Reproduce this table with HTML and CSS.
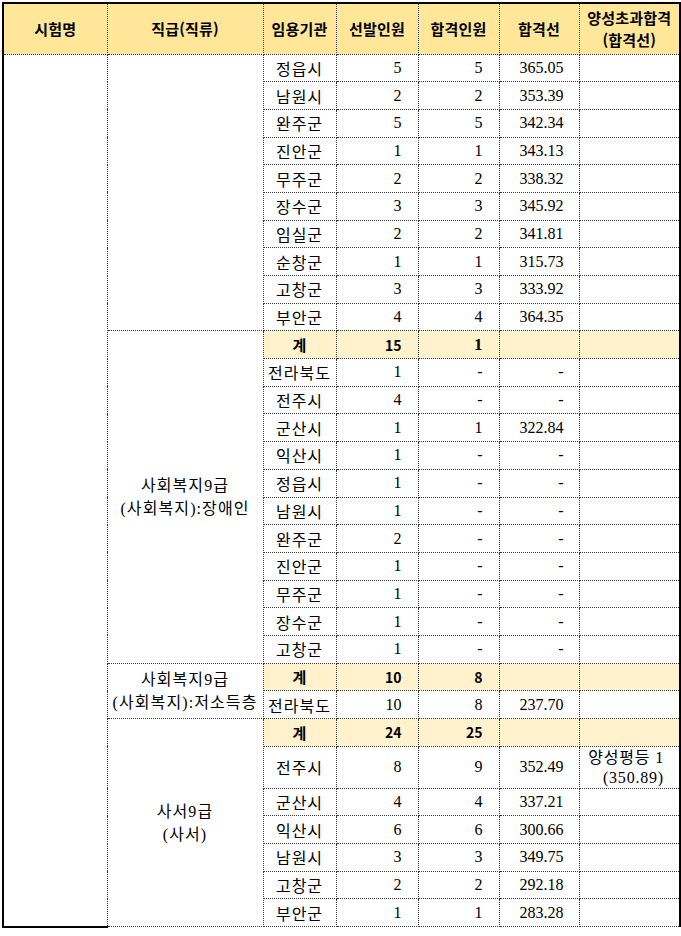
FILE: index.html
```html
<!DOCTYPE html>
<html lang="ko">
<head>
<meta charset="utf-8">
<title>합격선</title>
<link rel="stylesheet" href="styles.css">
</head>
<body>
<table class="grid">
  <colgroup>
    <col class="c1"><col class="c2"><col class="c3"><col class="c4"><col class="c5"><col class="c6"><col class="c7">
  </colgroup>
  <thead>
    <tr class="head">
      <th>시험명</th><th>직급(직류)</th><th>임용기관</th><th>선발인원</th><th>합격인원</th><th>합격선</th><th class="two">양성초과합격<br>(합격선)</th>
    </tr>
  </thead>
  <tbody>
    <tr><td class="exam" rowspan="31"></td><td class="grade" rowspan="10"></td><td class="org">정읍시</td><td class="num">5</td><td class="num">5</td><td class="score">365.05</td><td class="extra"></td></tr>
    <tr><td class="org">남원시</td><td class="num">2</td><td class="num">2</td><td class="score">353.39</td><td class="extra"></td></tr>
    <tr><td class="org">완주군</td><td class="num">5</td><td class="num">5</td><td class="score">342.34</td><td class="extra"></td></tr>
    <tr><td class="org">진안군</td><td class="num">1</td><td class="num">1</td><td class="score">343.13</td><td class="extra"></td></tr>
    <tr><td class="org">무주군</td><td class="num">2</td><td class="num">2</td><td class="score">338.32</td><td class="extra"></td></tr>
    <tr><td class="org">장수군</td><td class="num">3</td><td class="num">3</td><td class="score">345.92</td><td class="extra"></td></tr>
    <tr><td class="org">임실군</td><td class="num">2</td><td class="num">2</td><td class="score">341.81</td><td class="extra"></td></tr>
    <tr><td class="org">순창군</td><td class="num">1</td><td class="num">1</td><td class="score">315.73</td><td class="extra"></td></tr>
    <tr><td class="org">고창군</td><td class="num">3</td><td class="num">3</td><td class="score">333.92</td><td class="extra"></td></tr>
    <tr><td class="org">부안군</td><td class="num">4</td><td class="num">4</td><td class="score">364.35</td><td class="extra"></td></tr>

    <tr class="sum"><td class="grade" rowspan="12">사회복지9급<br>(사회복지):장애인</td><td class="org">계</td><td class="num">15</td><td class="num serifbold">1</td><td class="score"></td><td class="extra"></td></tr>
    <tr><td class="org">전라북도</td><td class="num">1</td><td class="num">-</td><td class="score">-</td><td class="extra"></td></tr>
    <tr><td class="org">전주시</td><td class="num">4</td><td class="num">-</td><td class="score">-</td><td class="extra"></td></tr>
    <tr><td class="org">군산시</td><td class="num">1</td><td class="num">1</td><td class="score">322.84</td><td class="extra"></td></tr>
    <tr><td class="org">익산시</td><td class="num">1</td><td class="num">-</td><td class="score">-</td><td class="extra"></td></tr>
    <tr><td class="org">정읍시</td><td class="num">1</td><td class="num">-</td><td class="score">-</td><td class="extra"></td></tr>
    <tr><td class="org">남원시</td><td class="num">1</td><td class="num">-</td><td class="score">-</td><td class="extra"></td></tr>
    <tr><td class="org">완주군</td><td class="num">2</td><td class="num">-</td><td class="score">-</td><td class="extra"></td></tr>
    <tr><td class="org">진안군</td><td class="num">1</td><td class="num">-</td><td class="score">-</td><td class="extra"></td></tr>
    <tr><td class="org">무주군</td><td class="num">1</td><td class="num">-</td><td class="score">-</td><td class="extra"></td></tr>
    <tr><td class="org">장수군</td><td class="num">1</td><td class="num">-</td><td class="score">-</td><td class="extra"></td></tr>
    <tr><td class="org">고창군</td><td class="num">1</td><td class="num">-</td><td class="score">-</td><td class="extra"></td></tr>

    <tr class="sum"><td class="grade" rowspan="2">사회복지9급<br>(사회복지):저소득층</td><td class="org">계</td><td class="num">10</td><td class="num">8</td><td class="score"></td><td class="extra"></td></tr>
    <tr><td class="org">전라북도</td><td class="num">10</td><td class="num">8</td><td class="score">237.70</td><td class="extra"></td></tr>

    <tr class="sum"><td class="grade last" rowspan="7">사서9급<br>(사서)</td><td class="org">계</td><td class="num">24</td><td class="num">25</td><td class="score"></td><td class="extra"></td></tr>
    <tr class="tall"><td class="org">전주시</td><td class="num">8</td><td class="num">9</td><td class="score">352.49</td><td class="extra note">양성평등 1<br>(350.89)</td></tr>
    <tr><td class="org">군산시</td><td class="num">4</td><td class="num">4</td><td class="score">337.21</td><td class="extra"></td></tr>
    <tr><td class="org">익산시</td><td class="num">6</td><td class="num">6</td><td class="score">300.66</td><td class="extra"></td></tr>
    <tr><td class="org">남원시</td><td class="num">3</td><td class="num">3</td><td class="score">349.75</td><td class="extra"></td></tr>
    <tr><td class="org">고창군</td><td class="num">2</td><td class="num">2</td><td class="score">292.18</td><td class="extra"></td></tr>
    <tr><td class="org">부안군</td><td class="num">1</td><td class="num">1</td><td class="score">283.28</td><td class="extra"></td></tr>
  </tbody>
</table>
</body>
</html>
```

FILE: styles.css
```css
html, body {
  margin: 0;
  padding: 0;
  background: #ffffff;
}

.grid {
  border-collapse: collapse;
  table-layout: fixed;
  width: 677px;
  margin: 2px 0 0 2px;
  border-top: 2px solid #000;
  border-left: 2px solid #000;
  border-right: 2px solid #000;
  color: #000;
  font-family: "Liberation Serif", "Noto Sans CJK KR", serif;
  font-size: 16px;
}

.c1 { width: 104px; }
.c2 { width: 156px; }
.c3 { width: 73px; }
.c4 { width: 82px; }
.c5 { width: 81px; }
.c6 { width: 80px; }
.c7 { width: 101px; }

.grid th,
.grid td {
  border: 1px dotted #3a3a3a;
  padding: 0;
  vertical-align: middle;
  white-space: nowrap;
  overflow: hidden;
}

.head {
  height: 51px;
  background: #ffe699;
}

.head th {
  font-family: "Noto Sans CJK KR", sans-serif;
  font-weight: 700;
  font-size: 15px;
  letter-spacing: 0.2px;
  line-height: 22px;
  text-align: center;
}

.grid tbody tr {
  height: 27.7px;
}

.grid tbody tr.tall {
  height: 41px;
}

.sum td {
  background: #fff2cc;
}

.sum td.grade {
  background: #ffffff;
}

.exam {
  border-bottom: 2px solid #000 !important;
}

.grade {
  text-align: center;
  line-height: 23px;
  letter-spacing: 1.1px;
  background: #ffffff;
}

.org {
  text-align: center;
  letter-spacing: 1px;
}

.sum .org {
  font-family: "Noto Sans CJK KR", sans-serif;
  font-weight: 700;
  font-size: 15px;
  letter-spacing: 0;
}

.num {
  text-align: right;
  padding-right: 16px !important;
}

.sum .num {
  font-family: "Noto Sans CJK KR", sans-serif;
  font-weight: 700;
  font-size: 14px;
}

.sum .num.serifbold {
  font-family: "Liberation Serif", serif;
  font-size: 17px;
}

.score {
  text-align: right;
  padding-right: 15px !important;
}

.extra {
  text-align: right;
  padding-right: 15px !important;
}

.note {
  vertical-align: top !important;
  line-height: 20px;
  padding-top: 1px !important;
  letter-spacing: 0.8px;
}
```
